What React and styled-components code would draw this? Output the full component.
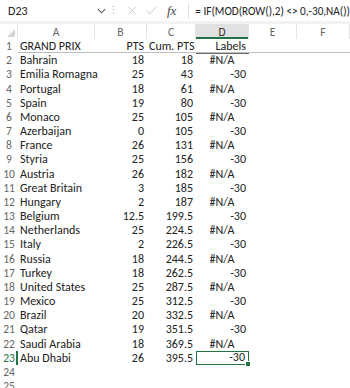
import React from 'react';
import styled, { createGlobalStyle } from 'styled-components';

const rows = [
	['GRAND PRIX', 'PTS', 'Cum. PTS', 'Labels'],
	['Bahrain', '18', '18', null],
	['Emilia Romagna', '25', '43', '-30'],
	['Portugal', '18', '61', null],
	['Spain', '19', '80', '-30'],
	['Monaco', '25', '105', null],
	['Azerbaijan', '0', '105', '-30'],
	['France', '26', '131', null],
	['Styria', '25', '156', '-30'],
	['Austria', '26', '182', null],
	['Great Britain', '3', '185', '-30'],
	['Hungary', '2', '187', null],
	['Belgium', '12.5', '199.5', '-30'],
	['Netherlands', '25', '224.5', null],
	['Italy', '2', '226.5', '-30'],
	['Russia', '18', '244.5', null],
	['Turkey', '18', '262.5', '-30'],
	['United States', '25', '287.5', null],
	['Mexico', '25', '312.5', '-30'],
	['Brazil', '20', '332.5', null],
	['Qatar', '19', '351.5', '-30'],
	['Saudi Arabia', '18', '369.5', null],
	['Abu Dhabi', '26', '395.5', '-30'],
	null,
	null,
];

const COLS = '18px 77px 52px 49px 53px 48px 1fr';

const App = () => {
	return (
		<>
			<GlobalStyle />
			<Sheet>
				<FormulaBar>
					<NameBox>
						<span>D23</span>
						<Chevron viewBox="0 0 10 6">
							<path d="M1 1l4 4 4-4" fill="none" stroke="#555" strokeWidth="1.2" />
						</Chevron>
					</NameBox>
					<Grip>⋮</Grip>
					<BarIcon viewBox="0 0 12 12">
						<path d="M1.5 1.5l9 9M10.5 1.5l-9 9" stroke="#c8c8c8" strokeWidth="1" />
					</BarIcon>
					<BarIcon viewBox="0 0 12 12">
						<path d="M1 6.5l3.5 3.5L11 2" fill="none" stroke="#c8c8c8" strokeWidth="1" />
					</BarIcon>
					<Fx>fx</Fx>
					<Formula>= IF(MOD(ROW(),2) &lt;&gt; 0,-30,NA())</Formula>
				</FormulaBar>
				<HeaderRow>
					<Corner>
						<svg width="8" height="8" viewBox="0 0 8 8">
							<path d="M8 0V8H0z" fill="#d6d6d6" />
						</svg>
					</Corner>
					{['A', 'B', 'C', 'D', 'E', 'F'].map((c) => (
						<ColHead key={c} $active={c === 'D'}>
							{c}
						</ColHead>
					))}
				</HeaderRow>
				{rows.map((r, i) => (
					<Row key={i} $first={i === 0}>
						<RowNum $active={i === 22}>{i + 1}</RowNum>
						<Cell>{r && r[0]}</Cell>
						<Cell $align="right">{r && r[1]}</Cell>
						<Cell $align="right">{r && r[2]}</Cell>
						<Cell
							$align={r && (i === 0 || r[3]) ? 'right' : 'center'}
							$selected={i === 22}
							$underline={i === 0}
						>
							{r && (r[3] === null ? '#N/A' : r[3])}
							{i === 22 && <Handle />}
						</Cell>
						<Cell />
						<Cell />
					</Row>
				))}
			</Sheet>
		</>
	);
};

export default App;

const GlobalStyle = createGlobalStyle`
	body {
		margin: 0;
		background: #ffffff;
		font-family: Carlito, Lato, "Liberation Sans", sans-serif;
	}
`;

const Sheet = styled.div`
	width: 350px;
	height: 388px;
	overflow: hidden;
	background: #ffffff;
	color: #222222;
`;

const FormulaBar = styled.div`
	height: 24px;
	display: flex;
	align-items: center;
	background: #ffffff;
	border-bottom: 3px solid #f3f3f3;
	box-sizing: border-box;
	font-size: 12px;
`;

const NameBox = styled.div`
	width: 109px;
	display: flex;
	align-items: center;
	justify-content: space-between;
	padding: 0 0 0 8px;
	box-sizing: border-box;
	color: #222;
`;

const Chevron = styled.svg`
	width: 9px;
	height: 6px;
`;

const Grip = styled.span`
	width: 16px;
	text-align: center;
	color: #b0b0b0;
	font-size: 11px;
`;

const BarIcon = styled.svg`
	width: 11px;
	height: 11px;
	margin: 0 4px 0 5px;
`;

const Fx = styled.span`
	font-family: 'Liberation Serif', serif;
	font-style: italic;
	font-size: 13px;
	color: #444;
	margin-left: 6px;
	width: 22px;
	border-right: 1px solid #e2e2e2;
`;

const Formula = styled.span`
	margin-left: 6px;
	white-space: nowrap;
	font-size: 11.2px;
	color: #222;
`;

const HeaderRow = styled.div`
	display: grid;
	grid-template-columns: ${COLS};
	height: 15px;
	font-size: 11.5px;
	color: #666;
`;

const Corner = styled.div`
	display: flex;
	align-items: flex-end;
	justify-content: flex-end;
	padding: 0 2px 2px 0;
	border-right: 1px solid #e4e4e4;
`;

const ColHead = styled.div`
	display: flex;
	align-items: center;
	justify-content: center;
	border-right: 1px solid #e4e4e4;
	background: ${(p) => (p.$active ? '#e1e1e1' : 'transparent')};
	box-shadow: ${(p) => (p.$active ? 'inset 0 -2px 0 #217346' : 'none')};
	color: ${(p) => (p.$active ? '#333' : '#666')};
`;

const Row = styled.div`
	display: grid;
	grid-template-columns: ${COLS};
	height: 14.18px;
	font-size: 12px;
	line-height: 14px;
	box-shadow: ${(p) => (p.$first ? 'inset 0 -1px 0 #bfbfbf' : 'none')};
`;

const RowNum = styled.div`
	text-align: center;
	font-size: 11.5px;
	color: ${(p) => (p.$active ? '#217346' : '#666')};
	background: #ffffff;
	box-shadow: ${(p) => (p.$active ? 'inset -2px 0 0 #217346' : 'none')};
`;

const Cell = styled.div`
	position: relative;
	padding: 0 3px 0 2px;
	text-align: ${(p) => p.$align || 'left'};
	white-space: nowrap;
	overflow: visible;
	box-sizing: border-box;
	border: ${(p) => (p.$selected ? '1.5px solid #217346' : 'none')};
	line-height: ${(p) => (p.$selected ? '11px' : '14px')};
	border-bottom: ${(p) => (p.$underline ? '1px solid #6a6a6a' : p.$selected ? '1.5px solid #217346' : 'none')};
`;

const Handle = styled.span`
	position: absolute;
	right: -3px;
	bottom: -3px;
	width: 4px;
	height: 4px;
	background: #217346;
	border: 1px solid #fff;
`;
